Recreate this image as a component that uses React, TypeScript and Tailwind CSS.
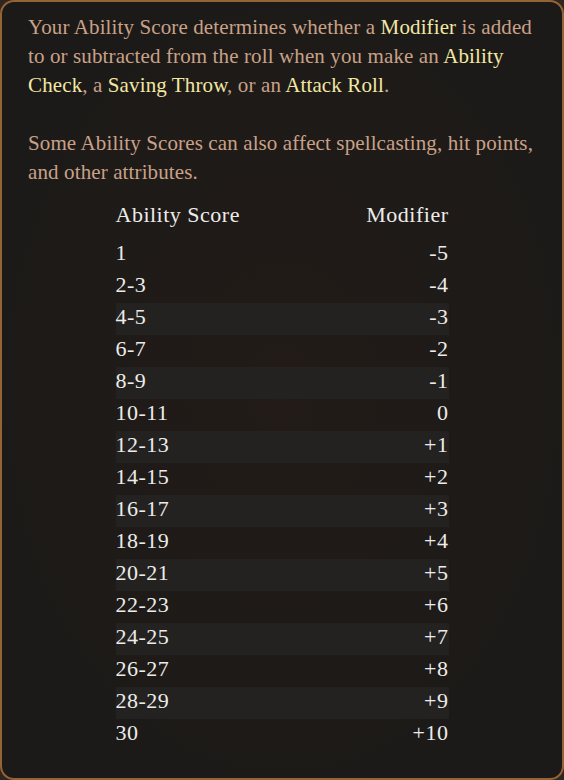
import React from 'react';

const rows: [string, string][] = [
  ['1', '-5'],
  ['2-3', '-4'],
  ['4-5', '-3'],
  ['6-7', '-2'],
  ['8-9', '-1'],
  ['10-11', '0'],
  ['12-13', '+1'],
  ['14-15', '+2'],
  ['16-17', '+3'],
  ['18-19', '+4'],
  ['20-21', '+5'],
  ['22-23', '+6'],
  ['24-25', '+7'],
  ['26-27', '+8'],
  ['28-29', '+9'],
  ['30', '+10'],
];

function Hl({ children }: { children: React.ReactNode }) {
  return <span className="text-[#f2e7a4]">{children}</span>;
}

export default function App() {
  return (
    <div className="w-[564px] h-[780px] bg-[#2e261f]" style={{ fontFamily: '"Liberation Serif", "DejaVu Serif", serif' }}>
      <div className="h-full rounded-[14px] border-2 border-[#946336] bg-[radial-gradient(ellipse_at_center,#221b17_0%,#1c1a18_75%)] px-[26px] pt-[11px]">
        {/* Intro text */}
        <div className="text-[21px] leading-[29px] tracking-[0.12px] text-[#c9a188] whitespace-nowrap">
          <p>
            Your Ability Score determines whether a <Hl>Modifier</Hl> is added
            <br />
            to or subtracted from the roll when you make an <Hl>Ability</Hl>
            <br />
            <Hl>Check</Hl>, a <Hl>Saving Throw</Hl>, or an <Hl>Attack Roll</Hl>.
          </p>
          <p className="mt-[29px]">
            Some Ability Scores can also affect spellcasting, hit points,
            <br />
            and other attributes.
          </p>
        </div>

        {/* Score table */}
        <div className="mx-auto mt-[16px] w-[333px] text-[22px] leading-[24px] tracking-[0.5px] text-[#ececea]">
          <div className="flex h-[36px] items-start justify-between">
            <span>Ability Score</span>
            <span>Modifier</span>
          </div>
          {rows.map(([score, mod], i) => (
            <div
              key={score}
              className={`flex h-[32px] items-start justify-between pt-[2px] ${
                i % 2 === 0 && i > 0 ? 'bg-[#242220]' : ''
              }`}
            >
              <span>{score}</span>
              <span>{mod}</span>
            </div>
          ))}
        </div>
      </div>
    </div>
  );
}
